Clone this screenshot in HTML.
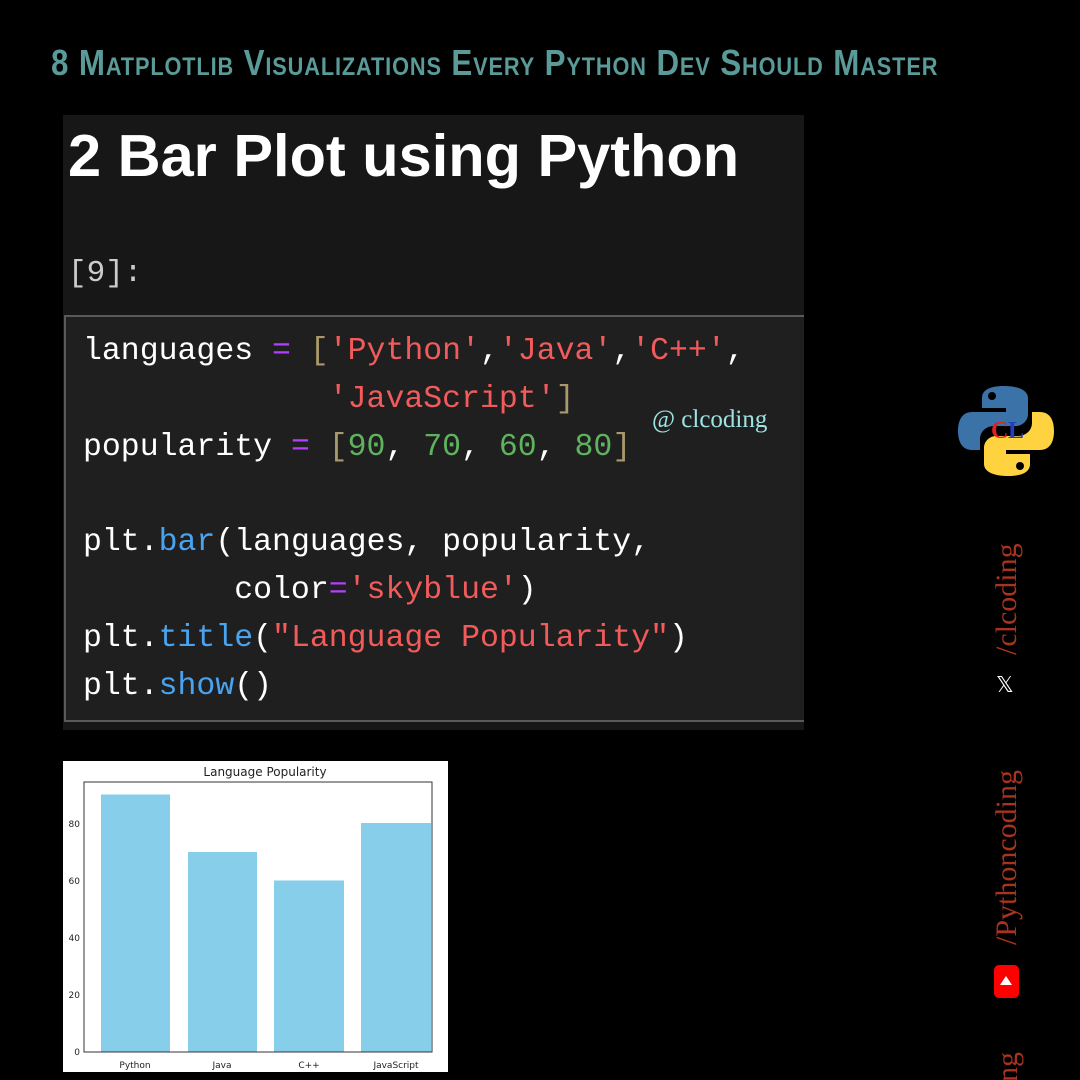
<!DOCTYPE html>
<html style="overflow:hidden;width:1080px;height:1080px"><head><style>
*{margin:0;padding:0;box-sizing:border-box}
body{width:1080px;height:1080px;background:#000;position:relative;overflow:hidden;font-family:"Liberation Sans",sans-serif}
.t{position:absolute;left:51px;top:42px;color:#5a9a98;font-family:"Liberation Sans Narrow","Liberation Sans",sans-serif;font-weight:bold;font-size:36px;font-variant:small-caps;letter-spacing:1px;transform:scaleX(.87);transform-origin:left;white-space:nowrap}
.panel{position:absolute;left:63px;top:115px;width:741px;height:615px;background:#171717}
.h{position:absolute;left:68px;top:121px;color:#fff;font-size:59.5px;font-weight:bold;white-space:nowrap}
.n{position:absolute;left:68px;top:256px;color:#ccc;font-family:"Liberation Mono",monospace;font-size:31px}
.code{position:absolute;left:64px;top:315px;width:740px;height:407px;background:#1f1f1f;border:2px solid #5a5a5a;border-right:none}
pre{position:absolute;left:83px;top:328px;font-family:"Liberation Mono",monospace;font-size:31.5px;line-height:47.8px;color:#fff}
.p{color:#b53fff}.s{color:#f25b5b}.b{color:#a89a6a}.g{color:#5fb35f}.f{color:#4aa3ee}
.w{position:absolute;left:652px;top:406px;color:#9fe3e3;font-family:"Liberation Serif",serif;font-size:25px}
.v{position:absolute;color:#a8331f;font-family:"Liberation Serif",serif;font-size:30px;transform:rotate(-90deg);transform-origin:left top;white-space:nowrap}
</style></head><body>
<div class="t">8 Matplotlib Visualizations Every Python Dev Should Master</div>
<div class="panel"></div>
<div class="h">2 Bar Plot using Python</div>
<div class="n">[9]:</div>
<div class="code"></div>
<pre>languages <span class="p">=</span> <span class="b">[</span><span class="s">'Python'</span>,<span class="s">'Java'</span>,<span class="s">'C++'</span>,
             <span class="s">'JavaScript'</span><span class="b">]</span>
popularity <span class="p">=</span> <span class="b">[</span><span class="g">90</span>, <span class="g">70</span>, <span class="g">60</span>, <span class="g">80</span><span class="b">]</span>

plt.<span class="f">bar</span>(languages, popularity,
        color<span class="p">=</span><span class="s">'skyblue'</span>)
plt.<span class="f">title</span>(<span class="s">"Language Popularity"</span>)
plt.<span class="f">show</span>()</pre>
<div class="w">@ clcoding</div>
<svg style="position:absolute;left:63px;top:761px" width="385" height="311" viewBox="63 761 385 311">
<rect x="63" y="761" width="385" height="311" fill="#fff"/>
<text x="265" y="776" font-family="DejaVu Sans,sans-serif" font-size="12" text-anchor="middle" fill="#222">Language Popularity</text>
<g fill="#87ceeb">
<rect x="101" y="794.5" width="69" height="257.5"/>
<rect x="188" y="852" width="69" height="200"/>
<rect x="274" y="880.5" width="70" height="171.5"/>
<rect x="361" y="823" width="70" height="229"/>
</g>
<rect x="84" y="782" width="348" height="270" fill="none" stroke="#333" stroke-width="1"/>
<g font-family="DejaVu Sans,sans-serif" font-size="9" fill="#222">
<text x="80" y="1055" text-anchor="end">0</text><text x="80" y="998" text-anchor="end">20</text>
<text x="80" y="941" text-anchor="end">40</text><text x="80" y="884" text-anchor="end">60</text>
<text x="80" y="827" text-anchor="end">80</text>
<text x="135" y="1068" text-anchor="middle">Python</text><text x="222" y="1068" text-anchor="middle">Java</text>
<text x="309" y="1068" text-anchor="middle">C++</text><text x="396" y="1068" text-anchor="middle">JavaScript</text>
</g></svg>
<svg style="position:absolute;left:958px;top:384px" width="96" height="94" viewBox="0 0 96 94">
<path d="M46 2C30 2 24 7 24 14V24H48V28H14C5 28 0 35 0 47C0 59 5 66 14 66H22V55C22 48 28 42 36 42H58C64 42 70 37 70 30V14C70 7 62 2 46 2Z" fill="#3b72a8"/>
<circle cx="34" cy="12" r="4" fill="#000"/>
<path d="M50 92C66 92 72 87 72 80V70H48V66H82C91 66 96 59 96 47C96 35 91 28 82 28H74V39C74 46 68 52 60 52H38C32 52 26 57 26 64V80C26 87 34 92 50 92Z" fill="#ffd340"/>
<circle cx="62" cy="82" r="4" fill="#000"/>
<text x="33" y="54" font-family="Liberation Serif,serif" font-weight="bold" font-size="24" fill="#e02020">C</text>
<text x="50" y="54" font-family="Liberation Serif,serif" font-weight="bold" font-size="24" fill="#2040c0">L</text>
</svg>
<div class="v" style="left:990px;top:655px">/clcoding</div>
<div style="position:absolute;left:996px;top:672px;color:#fff;font-size:22px">𝕏</div>
<div class="v" style="left:990px;top:945px">/Pythoncoding</div>
<div style="position:absolute;left:994px;top:965px;width:25px;height:33px;background:#f00;border-radius:5px"></div>
<div style="position:absolute;left:1000px;top:976px;width:0;height:0;border-left:6px solid transparent;border-right:6px solid transparent;border-bottom:9px solid #fff"></div>
<svg style="position:absolute;left:985px;top:1040px" width="40" height="40" viewBox="0 0 40 40">
<text transform="translate(32,42) rotate(-90)" font-family="Liberation Serif,serif" font-size="30" fill="#a8331f">ng</text>
</svg>
</body></html>
